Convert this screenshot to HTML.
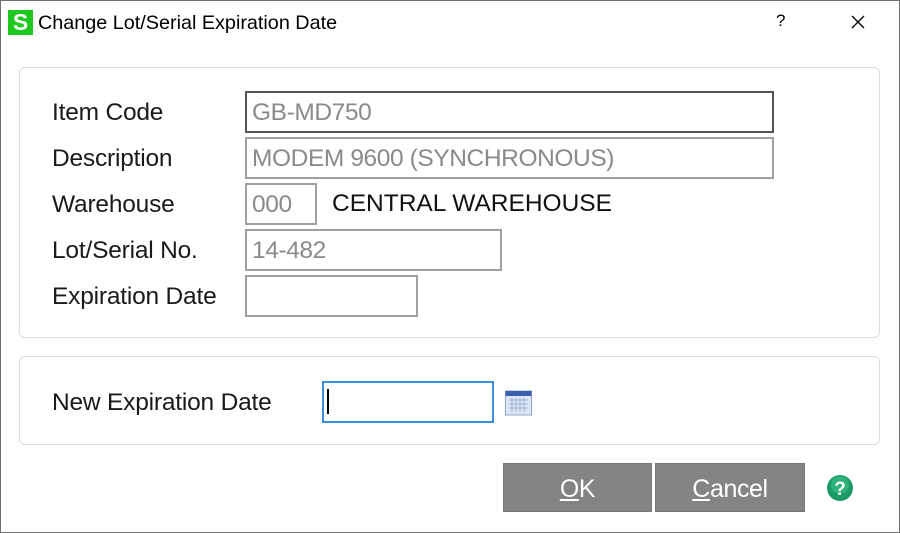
<!DOCTYPE html>
<html><head><style>
body{margin:0;width:900px;height:533px;background:#fff;position:relative;overflow:hidden;font-family:"Liberation Sans",Arial,sans-serif;}
.win{position:absolute;left:0;top:0;width:898px;height:531px;border:1px solid #707070;}
.t{position:absolute;white-space:nowrap;}
.panel{position:absolute;border:1px solid #dcdcdc;border-radius:6px;background:#fff;}
.lbl{position:absolute;left:52px;font-size:24.5px;color:#1a1a1a;letter-spacing:-0.2px;}
.box{position:absolute;border:2px solid #a0a0a0;box-sizing:border-box;font-size:24.5px;color:#8a8a8a;padding-left:5px;line-height:39px;letter-spacing:-0.4px;}
.btn{position:absolute;top:463px;height:49px;background:#848484;border:1px solid #777;box-sizing:border-box;color:#fff;font-size:25px;text-align:center;line-height:50px;letter-spacing:-0.4px;}
</style></head><body>
<div class="win"></div>
<div class="t" style="left:8px;top:10px;width:25px;height:25px;background:#1ec81e;color:#fff;font-weight:bold;font-size:23px;text-align:center;line-height:25px;">S</div>
<div class="t" style="left:38px;top:12px;font-size:19.8px;color:#000;">Change Lot/Serial Expiration Date</div>
<div class="t" style="left:776px;top:11px;font-size:17px;">?</div>
<svg class="t" style="left:851px;top:15px;" width="14" height="14" viewBox="0 0 14 14"><path d="M1 1L13 13M13 1L1 13" stroke="#000" stroke-width="1.3"/></svg>

<div class="panel" style="left:19px;top:67px;width:859px;height:269px;"></div>
<div class="lbl" style="top:99px;">Item Code</div>
<div class="lbl" style="top:145px;">Description</div>
<div class="lbl" style="top:191px;">Warehouse</div>
<div class="lbl" style="top:237px;">Lot/Serial No.</div>
<div class="lbl" style="top:283px;">Expiration Date</div>
<div class="box" style="left:245px;top:91px;width:529px;height:42px;border-color:#555;">GB-MD750</div>
<div class="box" style="left:245px;top:137px;width:529px;height:42px;">MODEM 9600 (SYNCHRONOUS)</div>
<div class="box" style="left:245px;top:183px;width:72px;height:42px;">000</div>
<div class="t" style="left:332px;top:190px;font-size:24.5px;color:#111;letter-spacing:0px;">CENTRAL WAREHOUSE</div>
<div class="box" style="left:245px;top:229px;width:257px;height:42px;">14-482</div>
<div class="box" style="left:245px;top:275px;width:173px;height:42px;"></div>

<div class="panel" style="left:19px;top:356px;width:859px;height:87px;"></div>
<div class="lbl" style="top:389px;">New Expiration Date</div>
<div class="t" style="left:322px;top:381px;width:172px;height:42px;border:2px solid #3c8fd8;box-sizing:border-box;"></div>
<div class="t" style="left:327px;top:389px;width:2px;height:25px;background:#000;"></div>
<svg class="t" style="left:505px;top:389px;" width="27" height="27" viewBox="0 0 27 27">
<rect x="0.5" y="2" width="26" height="24" fill="#dde6f4" stroke="#8fa4c8"/>
<rect x="0.5" y="2" width="26" height="5" fill="#3b5fae"/>
<g stroke="#9fb2d6" stroke-width="1"><path d="M4 11H23M4 15H23M4 19H23M7 9V23M11 9V23M15 9V23M19 9V23"/></g>
</svg>

<div class="btn" style="left:503px;width:149px;"><u>O</u>K</div>
<div class="btn" style="left:655px;width:150px;"><u>C</u>ancel</div>
<svg class="t" style="left:826px;top:474px;" width="28" height="28" viewBox="0 0 28 28">
<circle cx="14" cy="14" r="13" fill="#1b9a64"/>
<circle cx="14" cy="11" r="9" fill="#3fc58a" opacity="0.6"/>
<text x="14" y="21" text-anchor="middle" font-family="Liberation Sans" font-weight="bold" font-size="19" fill="#fff">?</text>
</svg>
</body></html>
